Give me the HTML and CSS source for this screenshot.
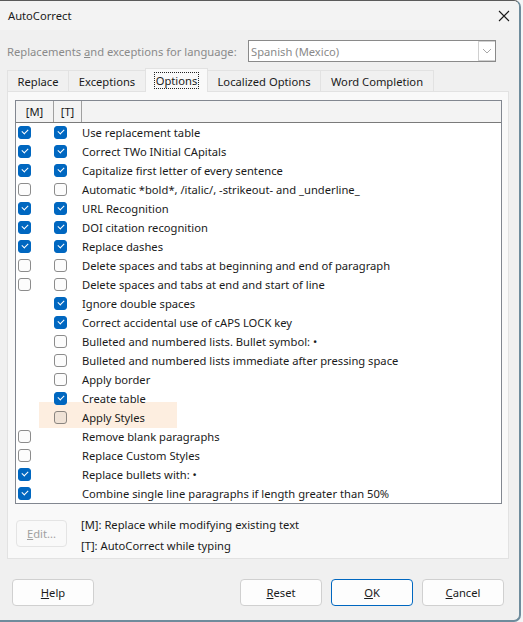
FILE: index.html
```html
<!DOCTYPE html>
<html>
<head>
<meta charset="utf-8">
<link rel="stylesheet" href="styles.css">
</head>
<body>
<div class="window">
  <div class="titlebar">
    <span class="title">AutoCorrect</span>
    <svg class="close" width="12" height="12" viewBox="0 0 12 12"><path d="M1 1 L11 11 M11 1 L1 11" stroke="#1a1a1a" stroke-width="1.1" fill="none"/></svg>
  </div>
  <div class="content">
    <div class="langrow">
      <span class="langlabel">Replacements <u>a</u>nd exceptions for language:</span>
      <div class="combo">
        <span class="combotext">Spanish (Mexico)</span>
        <span class="arrow"><svg width="10" height="6" viewBox="0 0 10 6"><path d="M1 1 L5 5 L9 1" stroke="#a8a8a8" stroke-width="1" fill="none"/></svg></span>
      </div>
    </div>
    <div class="tabs">
      <div class="tab w1">Replace</div>
      <div class="tab w2">Exceptions</div>
      <div class="tab sel w3"><span class="focus">Options</span></div>
      <div class="tab w4">Localized Options</div>
      <div class="tab w5">Word Completion</div>
    </div>
    <div class="page">
      <div class="list">
        <div class="lhead">
          <div class="hc hm">[M]</div>
          <div class="hc ht">[T]</div>
          <div class="hc hr"></div>
        </div>
        <div class="rows">
          <div class="row"><span class="cm"><i class="cb on"></i></span><span class="ct"><i class="cb on"></i></span><span class="tx">Use replacement table</span></div>
          <div class="row"><span class="cm"><i class="cb on"></i></span><span class="ct"><i class="cb on"></i></span><span class="tx">Correct TWo INitial CApitals</span></div>
          <div class="row"><span class="cm"><i class="cb on"></i></span><span class="ct"><i class="cb on"></i></span><span class="tx">Capitalize first letter of every sentence</span></div>
          <div class="row"><span class="cm"><i class="cb"></i></span><span class="ct"><i class="cb"></i></span><span class="tx">Automatic *bold*, /italic/, -strikeout- and _underline_</span></div>
          <div class="row"><span class="cm"><i class="cb on"></i></span><span class="ct"><i class="cb on"></i></span><span class="tx">URL Recognition</span></div>
          <div class="row"><span class="cm"><i class="cb on"></i></span><span class="ct"><i class="cb on"></i></span><span class="tx">DOI citation recognition</span></div>
          <div class="row"><span class="cm"><i class="cb on"></i></span><span class="ct"><i class="cb on"></i></span><span class="tx">Replace dashes</span></div>
          <div class="row"><span class="cm"><i class="cb"></i></span><span class="ct"><i class="cb"></i></span><span class="tx">Delete spaces and tabs at beginning and end of paragraph</span></div>
          <div class="row"><span class="cm"><i class="cb"></i></span><span class="ct"><i class="cb"></i></span><span class="tx">Delete spaces and tabs at end and start of line</span></div>
          <div class="row"><span class="cm"></span><span class="ct"><i class="cb on"></i></span><span class="tx">Ignore double spaces</span></div>
          <div class="row"><span class="cm"></span><span class="ct"><i class="cb on"></i></span><span class="tx">Correct accidental use of cAPS LOCK key</span></div>
          <div class="row"><span class="cm"></span><span class="ct"><i class="cb"></i></span><span class="tx">Bulleted and numbered lists. Bullet symbol: •</span></div>
          <div class="row"><span class="cm"></span><span class="ct"><i class="cb"></i></span><span class="tx">Bulleted and numbered lists immediate after pressing space</span></div>
          <div class="row"><span class="cm"></span><span class="ct"><i class="cb"></i></span><span class="tx">Apply border</span></div>
          <div class="row"><span class="cm"></span><span class="ct"><i class="cb on"></i></span><span class="tx">Create table</span></div>
          <div class="row hover"><span class="hl"></span><span class="cm"></span><span class="ct"><i class="cb hov"></i></span><span class="tx">Apply Styles</span></div>
          <div class="row"><span class="cm"><i class="cb"></i></span><span class="ct"></span><span class="tx">Remove blank paragraphs</span></div>
          <div class="row"><span class="cm"><i class="cb"></i></span><span class="ct"></span><span class="tx">Replace Custom Styles</span></div>
          <div class="row"><span class="cm"><i class="cb on"></i></span><span class="ct"></span><span class="tx">Replace bullets with: •</span></div>
          <div class="row"><span class="cm"><i class="cb on"></i></span><span class="ct"></span><span class="tx">Combine single line paragraphs if length greater than 50%</span></div>
        </div>
      </div>
      <div class="legend">
        <div class="btn edit"><u>E</u>dit...</div>
        <div class="notes">
          <div>[M]: Replace while modifying existing text</div>
          <div>[T]: AutoCorrect while typing</div>
        </div>
      </div>
    </div>
    <div class="buttons">
      <div class="btn b help"><u>H</u>elp</div>
      <div class="spacer"></div>
      <div class="btn b"><u>R</u>eset</div>
      <div class="btn b ok"><u>O</u>K</div>
      <div class="btn b"><u>C</u>ancel</div>
    </div>
  </div>
</div>
</body>
</html>
```
FILE: styles.css
```css
* { box-sizing: border-box; }
html, body { margin: 0; padding: 0; }
body {
  background: #f4f6f7;
  font-family: "Segoe UI", "Noto Sans", "Open Sans", sans-serif;
  font-size: 11.2px;
  color: #1a1a1a;
  width: 523px;
  height: 622px;
  overflow: hidden;
}
.window {
  width: 521px;
  height: 622px;
  background: #f0f0f0;
  border-top: 1px solid #5a5a5a;
  border-right: 2px solid #6f8c9c;
  border-bottom: 2px solid #6f8c9c;
  border-bottom-right-radius: 7px;
  border-top-right-radius: 7px;
  display: flex;
  flex-direction: column;
  overflow: hidden;
}
.titlebar {
  height: 29px;
  background: #f3f3f3;
  display: flex;
  align-items: center;
  padding-left: 8px;
  padding-right: 9px;
}
.title { flex: 1; }
.content { padding-left: 7px; display: flex; flex-direction: column; }
.langrow {
  margin-top: 10px;
  height: 22px;
  display: flex;
  align-items: center;
  white-space: nowrap;
}
.langlabel { width: 241px; color: #8a8a8a; }
.langlabel u { text-decoration-thickness: 1px; }
.combo {
  width: 248px;
  height: 22px;
  border: 1px solid #8a8a8a;
  background: #fff;
  display: flex;
  align-items: center;
  padding-left: 2px;
}
.combotext { flex: 1; color: #8a8a8a; }
.arrow {
  width: 17px;
  height: 20px;
  border: 1px solid #d0d0d0;
  border-right: none;
  display: flex;
  align-items: center;
  justify-content: center;
}
.tabs {
  margin-top: 6px;
  height: 23px;
  display: flex;
  align-items: flex-end;
  position: relative;
  z-index: 1;
  white-space: nowrap;
}
.tab {
  height: 21px;
  background: #f0f0f0;
  border: 1px solid #e2e2e2;
  border-bottom: none;
  margin-right: -1px;
  display: flex;
  align-items: center;
  justify-content: center;
}
.tab.sel {
  height: 24px;
  margin-bottom: -1px;
  background: #f9f9f9;
  padding-bottom: 1px;
}
.focus { outline: 1px dotted #222; outline-offset: 0px; padding: 0 1px; line-height: 15px; }
.w1 { width: 62px; }
.w2 { width: 78px; }
.w3 { width: 63px; }
.w4 { width: 114px; }
.w5 { width: 114px; }
.page {
  width: 502px;
  height: 468px;
  background: #f9f9f9;
  border: 1px solid #e2e2e2;
  padding: 8px 6px 0 7px;
}
.list {
  width: 487px;
  height: 404px;
  border: 1px solid #828790;
  background: #fff;
  position: relative;
  z-index: 0;
}
.lhead {
  height: 22px;
  display: flex;
  background: #f3f3f3;
  border-bottom: 1px solid #7a7a7a;
}
.hc {
  display: flex;
  align-items: center;
  justify-content: center;
  border-right: 1px solid #a0a0a0;
}
.hm { width: 38px; }
.ht { width: 28px; }
.hr { flex: 1; border-right: none; }
.row {
  height: 19px;
  display: flex;
  align-items: center;
  position: relative;
  white-space: nowrap;
}
.cm { width: 37px; padding-left: 2px; display: flex; align-items: center; }
.ct { width: 29px; padding-left: 1px; display: flex; align-items: center; }
.cb {
  display: block;
  width: 13px;
  height: 13px;
  border: 1px solid #8c8c8c;
  border-radius: 3px;
  background: #fcfcfc;
  position: relative;
}
.cb.on {
  background: #0067c0;
  border-color: #0067c0;
}
.cb.on::after {
  content: "";
  position: absolute;
  left: 3px;
  top: 2px;
  width: 5px;
  height: 3px;
  border-left: 1px solid #fff;
  border-bottom: 1px solid #fff;
  transform: rotate(-45deg);
}
.cb.hov { background: #efe2d6; border-color: #8a8580; }
.hl {
  position: absolute;
  left: 23px;
  top: -6px;
  width: 138px;
  height: 26px;
  background: #fdeee0;
  z-index: -1;
}
.legend {
  margin-top: 16px;
  display: flex;
  padding-left: 1px;
}
.btn {
  display: flex;
  align-items: center;
  justify-content: center;
  border: 1px solid #d0d0d0;
  border-radius: 4px;
  background: #fdfdfd;
  white-space: nowrap;
}
.edit {
  width: 51px;
  height: 27px;
  color: #a0a0a0;
  border-color: #e4e4e4;
  background: #f9f9f9;
}
.notes {
  margin-left: 14px;
  margin-top: -6px;
  line-height: 21px;
}
.buttons {
  margin-top: 20px;
  display: flex;
  padding-left: 5px;
  height: 27px;
}
.b { width: 82px; height: 27px; margin-right: 9px; }
.spacer { width: 137px; }
.ok { border-color: #0067c0; }
```
